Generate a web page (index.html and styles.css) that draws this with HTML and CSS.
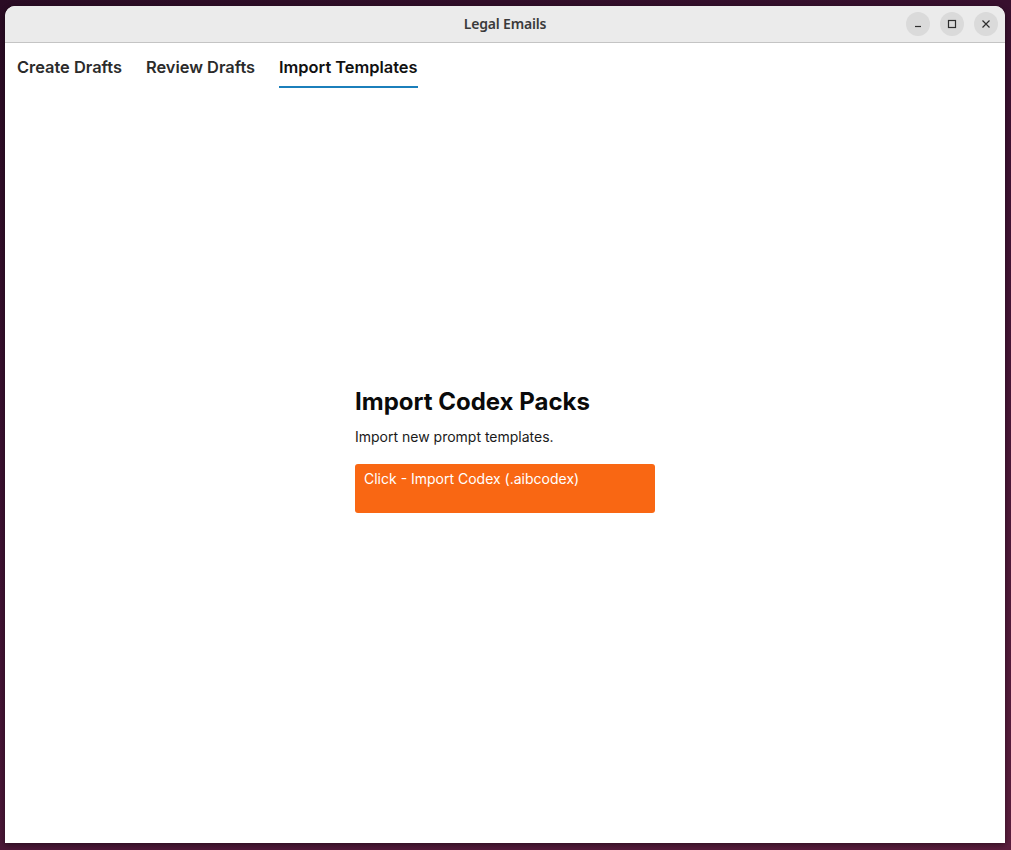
FILE: index.html
```html
<!DOCTYPE html>
<html>
<head>
<meta charset="utf-8">
<link rel="stylesheet" href="styles.css">
</head>
<body>
<div class="window">
  <div class="titlebar">
    <div class="title">Legal Emails</div>
    <div class="controls">
      <span class="ctl"><svg width="10" height="10" viewBox="0 0 10 10"><path d="M2 7.5h6" stroke="#2e2e2e" stroke-width="1.2"/></svg></span>
      <span class="ctl"><svg width="10" height="10" viewBox="0 0 10 10"><rect x="1.5" y="1.5" width="7" height="7" fill="none" stroke="#2e2e2e" stroke-width="1.2"/></svg></span>
      <span class="ctl"><svg width="10" height="10" viewBox="0 0 10 10"><path d="M1.5 1.5l7 7M8.5 1.5l-7 7" stroke="#2e2e2e" stroke-width="1.2"/></svg></span>
    </div>
  </div>
  <div class="app">
    <nav class="tabs">
      <div class="tab">Create Drafts</div>
      <div class="tab">Review Drafts</div>
      <div class="tab active">Import Templates</div>
    </nav>
    <main class="content">
      <section class="panel">
        <h1>Import Codex Packs</h1>
        <p>Import new prompt templates.</p>
        <button class="import">Click - Import Codex (.aibcodex)</button>
      </section>
    </main>
  </div>
</div>
</body>
</html>
```

FILE: styles.css
```css
html, body {
  margin: 0;
  height: 100%;
}
body {
  background: linear-gradient(160deg, #2a0c24 0%, #3f1233 45%, #5c1e3e 100%);
  overflow: hidden;
}
.window {
  margin: 6px 6px 0 5px;
  width: 1000px;
  height: 837px;
  background: #fff;
  border-radius: 10px 10px 0 0;
  display: flex;
  flex-direction: column;
  box-shadow: 0 2px 6px rgba(0,0,0,0.45);
}
.titlebar {
  height: 36px;
  flex: none;
  background: #ebebeb;
  border-bottom: 1px solid #c4c4c4;
  border-radius: 10px 10px 0 0;
  position: relative;
  display: flex;
  align-items: center;
  justify-content: center;
}
.title {
  font-family: "Noto Sans", "DejaVu Sans", sans-serif;
  font-weight: 600;
  font-size: 14px;
  color: #3a3a3a;
  letter-spacing: -0.2px;
  margin-top: -1px;
}
.controls {
  position: absolute;
  right: 7px;
  top: 6px;
  display: flex;
  gap: 10px;
}
.ctl {
  width: 24px;
  height: 24px;
  border-radius: 50%;
  background: #dadada;
  display: flex;
  align-items: center;
  justify-content: center;
}
.app {
  flex: 1;
  display: flex;
  flex-direction: column;
  font-family: Inter, "Noto Sans", sans-serif;
}
.tabs {
  display: flex;
  gap: 24px;
  padding: 0 12px;
  flex: none;
}
.tab {
  font-size: 16.4px;
  font-weight: 600;
  color: #2b2b2b;
  padding: 14px 0 9px;
  border-bottom: 2px solid transparent;
  line-height: 20px;
}
.tab.active {
  color: #111;
  border-bottom-color: #1b7fbb;
}
.content {
  flex: 1;
  display: flex;
  justify-content: center;
  align-items: flex-start;
}
.panel {
  width: 300px;
  margin-top: 299px;
}
.panel h1 {
  margin: 0;
  font-size: 24px;
  font-weight: 700;
  color: #0a0a0a;
  line-height: 30px;
}
.panel p {
  margin: 11px 0 0;
  font-size: 14px;
  color: #1a1a1a;
  line-height: 18px;
}
.import {
  margin-top: 18px;
  width: 300px;
  height: 49px;
  border: none;
  border-radius: 3px;
  background: #f96713;
  color: #fff;
  font-family: Inter, "Noto Sans", sans-serif;
  font-size: 14px;
  text-align: left;
  padding: 6px 9px;
  display: flex;
  align-items: flex-start;
}
```
